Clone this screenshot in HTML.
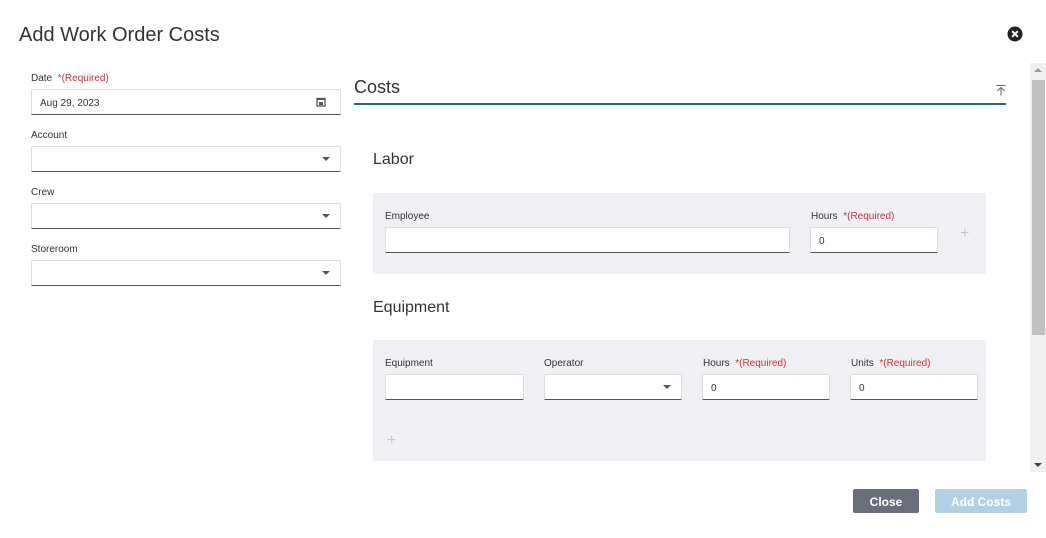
<!DOCTYPE html>
<html><head><style>
*{box-sizing:border-box;margin:0;padding:0}
body{width:1046px;height:538px;background:#fff;font-family:"Liberation Sans",sans-serif;color:#333;position:relative;overflow:hidden}
.a{position:absolute}
.lbl{position:absolute;font-size:10px;color:#333}
.req{color:#d0313a}
.inp{position:absolute;background:#fff;border:1px solid #ddd;border-bottom:1px solid #555;border-radius:2px 2px 0 0;font-size:10px;padding-left:8px;padding-top:2px;display:flex;align-items:center;color:#333}
.dd:after{content:"";position:absolute;right:10px;top:10px;border-left:4px solid transparent;border-right:4px solid transparent;border-top:4px solid #555}
.panel{position:absolute;background:#f0f0f4}
.h{position:absolute;font-size:16px;color:#333}
.plus{position:absolute;color:#c8c8cc;font-size:16px}
</style></head><body>
<div class="a" style="left:19px;top:24px;font-size:20px;color:#333">Add Work Order Costs</div>
<svg class="a" style="left:1007px;top:26px" width="16" height="16"><circle cx="8" cy="8" r="7.5" fill="#222"/><path d="M5.2 5.2L10.8 10.8M10.8 5.2L5.2 10.8" stroke="#fff" stroke-width="2"/></svg>

<div class="lbl" style="left:31px;top:73px">Date <span class="req">&nbsp;*(Required)</span></div>
<div class="inp" style="left:31px;top:89px;width:310px;height:26px">Aug 29, 2023
<svg class="a" style="right:14px;top:7px" width="10" height="10"><rect x="1" y="1.5" width="8" height="7.5" fill="none" stroke="#555" stroke-width="1.3"/><rect x="1" y="1" width="8" height="2" fill="#555"/><rect x="3" y="5" width="4" height="3" fill="#555"/></svg></div>
<div class="lbl" style="left:31px;top:130px">Account</div>
<div class="inp dd" style="left:31px;top:146px;width:310px;height:26px"></div>
<div class="lbl" style="left:31px;top:187px">Crew</div>
<div class="inp dd" style="left:31px;top:203px;width:310px;height:26px"></div>
<div class="lbl" style="left:31px;top:244px">Storeroom</div>
<div class="inp dd" style="left:31px;top:260px;width:310px;height:26px"></div>

<div class="a" style="left:354px;top:77px;font-size:18px;color:#333">Costs</div>
<div class="a" style="left:354px;top:103px;width:652px;height:2px;background:#1f64a0"></div>
<svg class="a" style="left:996px;top:85px" width="10" height="11"><path d="M0.5 0.5H9.5M5 2.5V10.5M1.5 6L5 2.5L8.5 6" stroke="#666" fill="none" stroke-width="1"/></svg>

<div class="h" style="left:373px;top:151px">Labor</div>
<div class="panel" style="left:373px;top:193px;width:613px;height:81px"></div>
<div class="lbl" style="left:385px;top:211px">Employee</div>
<div class="inp" style="left:385px;top:227px;width:405px;height:26px"></div>
<div class="lbl" style="left:811px;top:211px">Hours <span class="req">&nbsp;*(Required)</span></div>
<div class="inp" style="left:810px;top:227px;width:128px;height:26px">0</div>
<div class="plus" style="left:960px;top:225px">+</div>

<div class="h" style="left:373px;top:299px">Equipment</div>
<div class="panel" style="left:373px;top:340px;width:613px;height:121px"></div>
<div class="lbl" style="left:385px;top:358px">Equipment</div>
<div class="inp" style="left:385px;top:374px;width:139px;height:26px"></div>
<div class="lbl" style="left:544px;top:358px">Operator</div>
<div class="inp dd" style="left:544px;top:374px;width:138px;height:26px"></div>
<div class="lbl" style="left:703px;top:358px">Hours <span class="req">&nbsp;*(Required)</span></div>
<div class="inp" style="left:702px;top:374px;width:128px;height:26px">0</div>
<div class="lbl" style="left:851px;top:358px">Units <span class="req">&nbsp;*(Required)</span></div>
<div class="inp" style="left:850px;top:374px;width:128px;height:26px">0</div>
<div class="plus" style="left:387px;top:432px">+</div>

<div class="a" style="left:1030px;top:63px;width:16px;height:409px;background:#f0f0f0"></div>
<div class="a" style="left:1032px;top:80px;width:13px;height:255px;background:#c1c1c1"></div>
<div class="a" style="left:1034px;top:68px;border-left:4px solid transparent;border-right:4px solid transparent;border-bottom:4px solid #999"></div>
<div class="a" style="left:1034px;top:463px;border-left:4px solid transparent;border-right:4px solid transparent;border-top:4px solid #444"></div>

<div class="a" style="left:853px;top:489px;width:66px;height:24px;background:#6a6d7a;border-radius:2px;color:#fff;font-size:12px;font-weight:bold;display:flex;align-items:center;justify-content:center;padding-top:1px">Close</div>
<div class="a" style="left:935px;top:489px;width:92px;height:24px;background:#b1d0e3;border-radius:2px;color:#fff;font-size:12px;font-weight:bold;display:flex;align-items:center;justify-content:center;padding-top:1px">Add Costs</div>
</body></html>
